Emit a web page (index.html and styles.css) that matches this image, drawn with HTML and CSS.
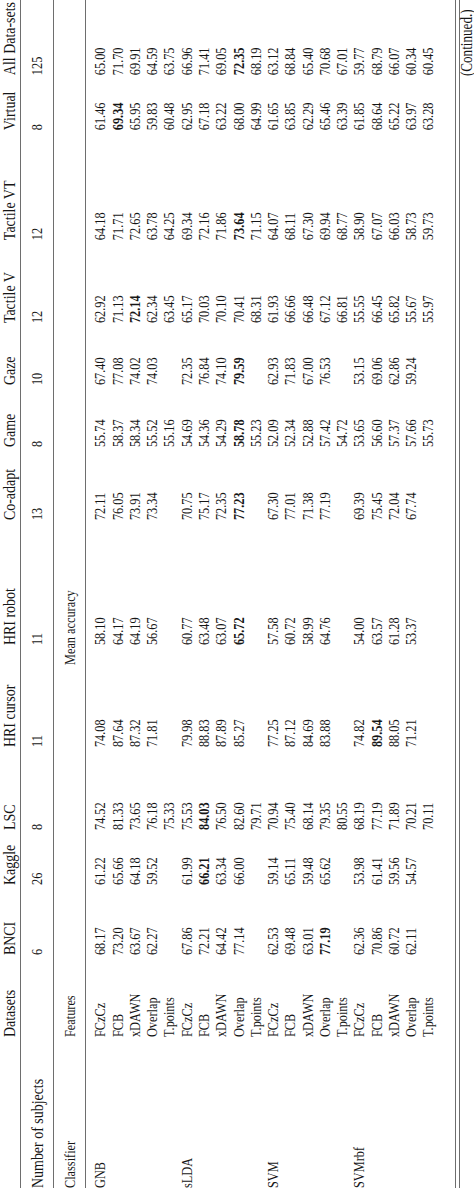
FILE: index.html
```html
<!DOCTYPE html>
<html>
<head>
<meta charset="utf-8">
<link rel="stylesheet" href="styles.css">
</head>
<body>
<div class="frame">
<div class="page">
  <div class="row head">
    <div></div><div>Datasets</div><div>BNCI</div><div>Kaggle</div><div>LSC</div><div>HRI cursor</div><div>HRI robot</div><div>Co-adapt</div><div>Game</div><div>Gaze</div><div>Tactile V</div><div>Tactile VT</div><div>Virtual</div><div>All Data-sets</div>
  </div>
  <div class="row subj">
    <div class="big">Number of subjects</div><div></div><div>6</div><div>26</div><div>8</div><div>11</div><div>11</div><div>13</div><div>8</div><div>10</div><div>12</div><div>12</div><div>8</div><div>125</div>
  </div>
  <div class="row cls">
    <div>Classifier</div><div>Features</div><div class="mean">Mean accuracy</div>
  </div>
  <div class="body">
    <div class="row"><div>GNB</div><div>FCzCz</div><div>68.17</div><div>61.22</div><div>74.52</div><div>74.08</div><div>58.10</div><div>72.11</div><div>55.74</div><div>67.40</div><div>62.92</div><div>64.18</div><div>61.46</div><div>65.00</div></div>
    <div class="row"><div></div><div>FCB</div><div>73.20</div><div>65.66</div><div>81.33</div><div>87.64</div><div>64.17</div><div>76.05</div><div>58.37</div><div>77.08</div><div>71.13</div><div>71.71</div><div class="best">69.34</div><div>71.70</div></div>
    <div class="row"><div></div><div>xDAWN</div><div>63.67</div><div>64.18</div><div>73.65</div><div>87.32</div><div>64.19</div><div>73.91</div><div>58.34</div><div>74.02</div><div class="best">72.14</div><div>72.65</div><div>65.95</div><div>69.91</div></div>
    <div class="row"><div></div><div>Overlap</div><div>62.27</div><div>59.52</div><div>76.18</div><div>71.81</div><div>56.67</div><div>73.34</div><div>55.52</div><div>74.03</div><div>62.34</div><div>63.78</div><div>59.83</div><div>64.59</div></div>
    <div class="row"><div></div><div>T.points</div><div></div><div></div><div>75.33</div><div></div><div></div><div></div><div>55.16</div><div></div><div>63.45</div><div>64.25</div><div>60.48</div><div>63.75</div></div>

    <div class="row"><div>sLDA</div><div>FCzCz</div><div>67.86</div><div>61.99</div><div>75.53</div><div>79.98</div><div>60.77</div><div>70.75</div><div>54.69</div><div>72.35</div><div>65.17</div><div>69.34</div><div>62.95</div><div>66.96</div></div>
    <div class="row"><div></div><div>FCB</div><div>72.21</div><div class="best">66.21</div><div class="best">84.03</div><div>88.83</div><div>63.48</div><div>75.17</div><div>54.36</div><div>76.84</div><div>70.03</div><div>72.16</div><div>67.18</div><div>71.41</div></div>
    <div class="row"><div></div><div>xDAWN</div><div>64.42</div><div>63.34</div><div>76.50</div><div>87.89</div><div>63.07</div><div>72.35</div><div>54.29</div><div>74.10</div><div>70.10</div><div>71.86</div><div>63.22</div><div>69.05</div></div>
    <div class="row"><div></div><div>Overlap</div><div>77.14</div><div>66.00</div><div>82.60</div><div>85.27</div><div class="best">65.72</div><div class="best">77.23</div><div class="best">58.78</div><div class="best">79.59</div><div>70.41</div><div class="best">73.64</div><div>68.00</div><div class="best">72.35</div></div>
    <div class="row"><div></div><div>T.points</div><div></div><div></div><div>79.71</div><div></div><div></div><div></div><div>55.23</div><div></div><div>68.31</div><div>71.15</div><div>64.99</div><div>68.19</div></div>

    <div class="row"><div>SVM</div><div>FCzCz</div><div>62.53</div><div>59.14</div><div>70.94</div><div>77.25</div><div>57.58</div><div>67.30</div><div>52.09</div><div>62.93</div><div>61.93</div><div>64.07</div><div>61.65</div><div>63.12</div></div>
    <div class="row"><div></div><div>FCB</div><div>69.48</div><div>65.11</div><div>75.40</div><div>87.12</div><div>60.72</div><div>77.01</div><div>52.34</div><div>71.83</div><div>66.66</div><div>68.11</div><div>63.85</div><div>68.84</div></div>
    <div class="row"><div></div><div>xDAWN</div><div>63.01</div><div>59.48</div><div>68.14</div><div>84.69</div><div>58.99</div><div>71.38</div><div>52.88</div><div>67.00</div><div>66.48</div><div>67.30</div><div>62.29</div><div>65.40</div></div>
    <div class="row"><div></div><div>Overlap</div><div class="best">77.19</div><div>65.62</div><div>79.35</div><div>83.88</div><div>64.76</div><div>77.19</div><div>57.42</div><div>76.53</div><div>67.12</div><div>69.94</div><div>65.46</div><div>70.68</div></div>
    <div class="row"><div></div><div>T.points</div><div></div><div></div><div>80.55</div><div></div><div></div><div></div><div>54.72</div><div></div><div>66.81</div><div>68.77</div><div>63.39</div><div>67.01</div></div>

    <div class="row"><div>SVMrbf</div><div>FCzCz</div><div>62.36</div><div>53.98</div><div>68.19</div><div>74.82</div><div>54.00</div><div>69.39</div><div>53.65</div><div>53.15</div><div>55.55</div><div>58.90</div><div>61.85</div><div>59.77</div></div>
    <div class="row"><div></div><div>FCB</div><div>70.86</div><div>61.41</div><div>77.19</div><div class="best">89.54</div><div>63.57</div><div>75.45</div><div>56.60</div><div>69.06</div><div>66.45</div><div>67.07</div><div>68.64</div><div>68.79</div></div>
    <div class="row"><div></div><div>xDAWN</div><div>60.72</div><div>59.56</div><div>71.89</div><div>88.05</div><div>61.28</div><div>72.04</div><div>57.37</div><div>62.86</div><div>65.82</div><div>66.03</div><div>65.22</div><div>66.07</div></div>
    <div class="row"><div></div><div>Overlap</div><div>62.11</div><div>54.57</div><div>70.21</div><div>71.21</div><div>53.37</div><div>67.74</div><div>57.66</div><div>59.24</div><div>55.67</div><div>58.73</div><div>63.97</div><div>60.34</div></div>
    <div class="row"><div></div><div>T.points</div><div></div><div></div><div>70.11</div><div></div><div></div><div></div><div>55.73</div><div></div><div>55.97</div><div>59.73</div><div>63.28</div><div>60.45</div></div>
  </div>
  <div class="rule"></div>
  <div class="cont">(Continued.)</div>
</div>
</div>
</body>
</html>
```

FILE: styles.css
```css
html {
  background: #ffffff;
}

body {
  margin: 0;
  padding: 0;
}

.frame {
  width: 474px;
  height: 1188px;
  overflow: hidden;
}

.page {
  width: 1500px;
  height: 474px;
  transform-origin: 0 0;
  transform: translateY(1188px) rotate(-90deg) scaleX(0.82);
  font-family: "Liberation Serif", "Times New Roman", serif;
  font-size: 15px;
  color: #161616;
  white-space: nowrap;
}

.row {
  display: grid;
  grid-template-columns: 184.1px 100px 85.4px 67.1px 101.2px 124.4px 152.4px 89px 75.6px 75.6px 101.2px 134.1px 67.1px 1fr;
  line-height: 17.26px;
}

.head {
  font-size: 17px;
  line-height: 20px;
  height: 20px;
  border-bottom: 1px solid #6e6e6e;
}

.subj {
  padding: 8px 0 7px;
  line-height: 17px;
  border-bottom: 1px solid #6e6e6e;
}

.big {
  font-size: 17px;
}

.cls {
  padding: 7.5px 0 6.5px;
  line-height: 17px;
  border-bottom: 1px solid #6e6e6e;
}

.mean {
  grid-column: 3 / 15;
  padding-left: 353.7px;
}

.body {
  padding: 6.4px 0 17.4px;
}

.best {
  font-weight: bold;
}

.rule {
  height: 3px;
  border-top: 1px solid #6e6e6e;
  border-bottom: 1px solid #6e6e6e;
}

.cont {
  font-size: 16px;
  line-height: 14px;
  padding-left: 1356px;
}
```
